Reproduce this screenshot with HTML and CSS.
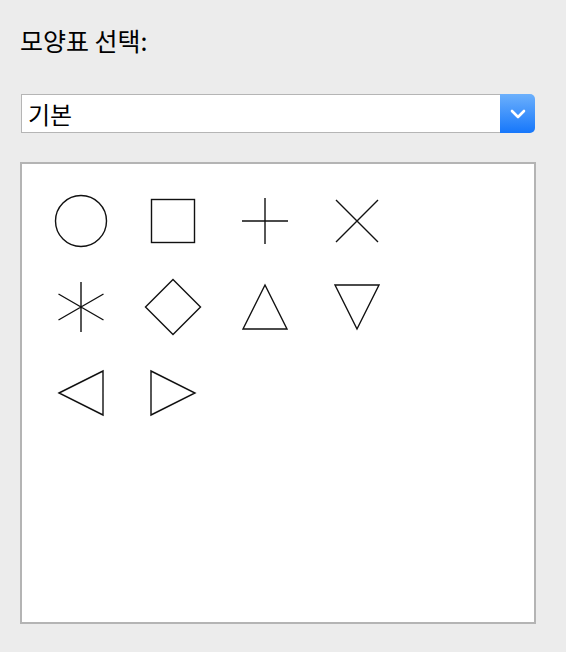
FILE: index.html
```html
<html>

<head>
    <link rel="stylesheet" href="styles.css">
</head>

<body>
    <div class="picker">
        <label class="picker__label">모양표 선택:</label>
        <div class="select">
            <span class="select__value">기본</span>
            <span class="select__button">
                <svg width="16" height="10" viewBox="0 0 16 10">
                    <path d="M2 2 L8 8 L14 2" fill="none" stroke="#fff" stroke-width="2.6" stroke-linecap="round" stroke-linejoin="round" />
                </svg>
            </span>
        </div>
        <div class="markers">
            <div class="marker">
                <svg width="92" height="86" viewBox="0 0 92 86">
                    <circle cx="46" cy="43" r="25.5" />
                </svg>
            </div>
            <div class="marker">
                <svg width="92" height="86" viewBox="0 0 92 86">
                    <rect x="24.5" y="21.5" width="43" height="43" />
                </svg>
            </div>
            <div class="marker">
                <svg width="92" height="86" viewBox="0 0 92 86">
                    <path d="M23 43 H69 M46 20 V66" />
                </svg>
            </div>
            <div class="marker">
                <svg width="92" height="86" viewBox="0 0 92 86">
                    <path d="M25 22 L67 64 M67 22 L25 64" />
                </svg>
            </div>
            <div class="marker">
                <svg width="92" height="86" viewBox="0 0 92 86">
                    <path d="M46 18 V68 M23.5 30 L68.5 56 M68.5 30 L23.5 56" />
                </svg>
            </div>
            <div class="marker">
                <svg width="92" height="86" viewBox="0 0 92 86">
                    <path d="M46 15.5 L73.5 43 L46 70.5 L18.5 43 Z" />
                </svg>
            </div>
            <div class="marker">
                <svg width="92" height="86" viewBox="0 0 92 86">
                    <path d="M46 21 L68 65 H24 Z" />
                </svg>
            </div>
            <div class="marker">
                <svg width="92" height="86" viewBox="0 0 92 86">
                    <path d="M24 21 H68 L46 65 Z" />
                </svg>
            </div>
            <div class="marker">
                <svg width="92" height="86" viewBox="0 0 92 86">
                    <path d="M24 43 L68 21 V65 Z" />
                </svg>
            </div>
            <div class="marker">
                <svg width="92" height="86" viewBox="0 0 92 86">
                    <path d="M24 21 L68 43 L24 65 Z" />
                </svg>
            </div>
        </div>
    </div>
</body>

</html>
```

FILE: styles.css
```css
body {
    margin: 0;
    padding: 0;
    background-color: #ececec;
    color: #000;
    font-family: "Noto Sans CJK KR", "Noto Sans", sans-serif;
}

div.picker {
    display: flex;
    flex-flow: column nowrap;
    padding: 26px 30px 28px 20px;
}

label.picker__label {
    display: block;
    font-size: 25px;
    line-height: 28px;
    margin: 0 0 40px 0;
}

div.select {
    display: flex;
    flex-flow: row nowrap;
    height: 39px;
    margin: 0 1px 29px 1px;
}

span.select__value {
    flex: 1 1 auto;
    display: flex;
    align-items: center;
    padding-left: 6px;
    background-color: #fff;
    border: 1px solid #b5b5b5;
    border-right: none;
    font-size: 24px;
}

span.select__button {
    width: 35px;
    display: flex;
    justify-content: center;
    align-items: center;
    border-radius: 0 5px 5px 0;
    background: linear-gradient(#6cb0fc, #1677fb);
}

div.markers {
    display: grid;
    grid-template-columns: repeat(4, 92px);
    grid-auto-rows: 86px;
    align-content: start;
    height: 444px;
    padding: 14px 0 0 13px;
    background-color: #fff;
    border: 2px solid #b4b4b4;
}

div.marker svg {
    display: block;
    fill: none;
    stroke: #111;
    stroke-width: 1.4;
}
```
